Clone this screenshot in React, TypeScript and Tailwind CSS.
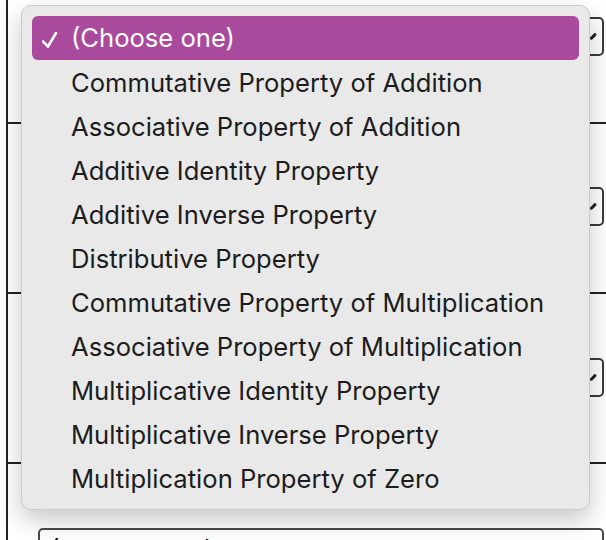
import React from "react";

const items = [
  "Commutative Property of Addition",
  "Associative Property of Addition",
  "Additive Identity Property",
  "Additive Inverse Property",
  "Distributive Property",
  "Commutative Property of Multiplication",
  "Associative Property of Multiplication",
  "Multiplicative Identity Property",
  "Multiplicative Inverse Property",
  "Multiplication Property of Zero",
];

function SelectEdge() {
  return (
    <div className="ml-auto mr-[2px] flex h-[39px] w-[40px] shrink-0 items-center rounded-[5px] border-2 border-[#3a3a3a] bg-white pl-[23px]">
      <div className="h-[2.5px] w-[8px] -rotate-45 rounded-full bg-[#222]" />
    </div>
  );
}

export default function App() {
  const font = { fontFamily: "Inter, 'Noto Sans', sans-serif" };
  return (
    <div className="relative h-[540px] w-[606px] overflow-hidden bg-white" style={font}>
      <div className="ml-[6px] flex h-full flex-col border-l-2 border-[#222]">
        <div className="flex h-[124px] shrink-0 flex-col border-b-2 border-[#222] pt-[17px]">
          <SelectEdge />
        </div>
        <div className="flex h-[170px] shrink-0 flex-col border-b-2 border-[#222] pt-[63px]">
          <SelectEdge />
        </div>
        <div className="flex h-[170px] shrink-0 flex-col border-b-2 border-[#222] pt-[64px]">
          <SelectEdge />
        </div>
        <div className="flex shrink-0 flex-col pl-[30px] pt-[64px]">
          <div className="h-[40px] w-[566px] rounded-[5px] border-2 border-[#4a4a4a] pl-[10px] text-[25.6px] leading-[40px] text-black">
            (Choose one)
          </div>
        </div>
      </div>

      <div className="absolute left-[21px] top-[5px] flex h-[505px] w-[569px] flex-col rounded-[10px] border border-[#cbcbcb] bg-[#e9e9e9] px-[10px] pt-[10px] shadow-[0_10px_24px_rgba(0,0,0,0.22)]">
        <div className="flex h-[44px] shrink-0 items-center rounded-[6px] bg-[#aa4a9d] pl-[10px] text-[25.6px] text-white">
          <svg width="29" height="44" viewBox="0 0 29 44" className="shrink-0">
            <polyline
              points="1,25.5 6,30.5 14,17"
              fill="none"
              stroke="white"
              strokeWidth="2.6"
              strokeLinecap="round"
              strokeLinejoin="round"
            />
          </svg>
          <span className="pt-[1px]">(Choose one)</span>
        </div>
        {items.map((t) => (
          <div key={t} className="flex h-[44px] shrink-0 items-center pl-[39px] pt-[2px] text-[25.6px] text-[#1c1c1c]">
            {t}
          </div>
        ))}
      </div>
    </div>
  );
}
